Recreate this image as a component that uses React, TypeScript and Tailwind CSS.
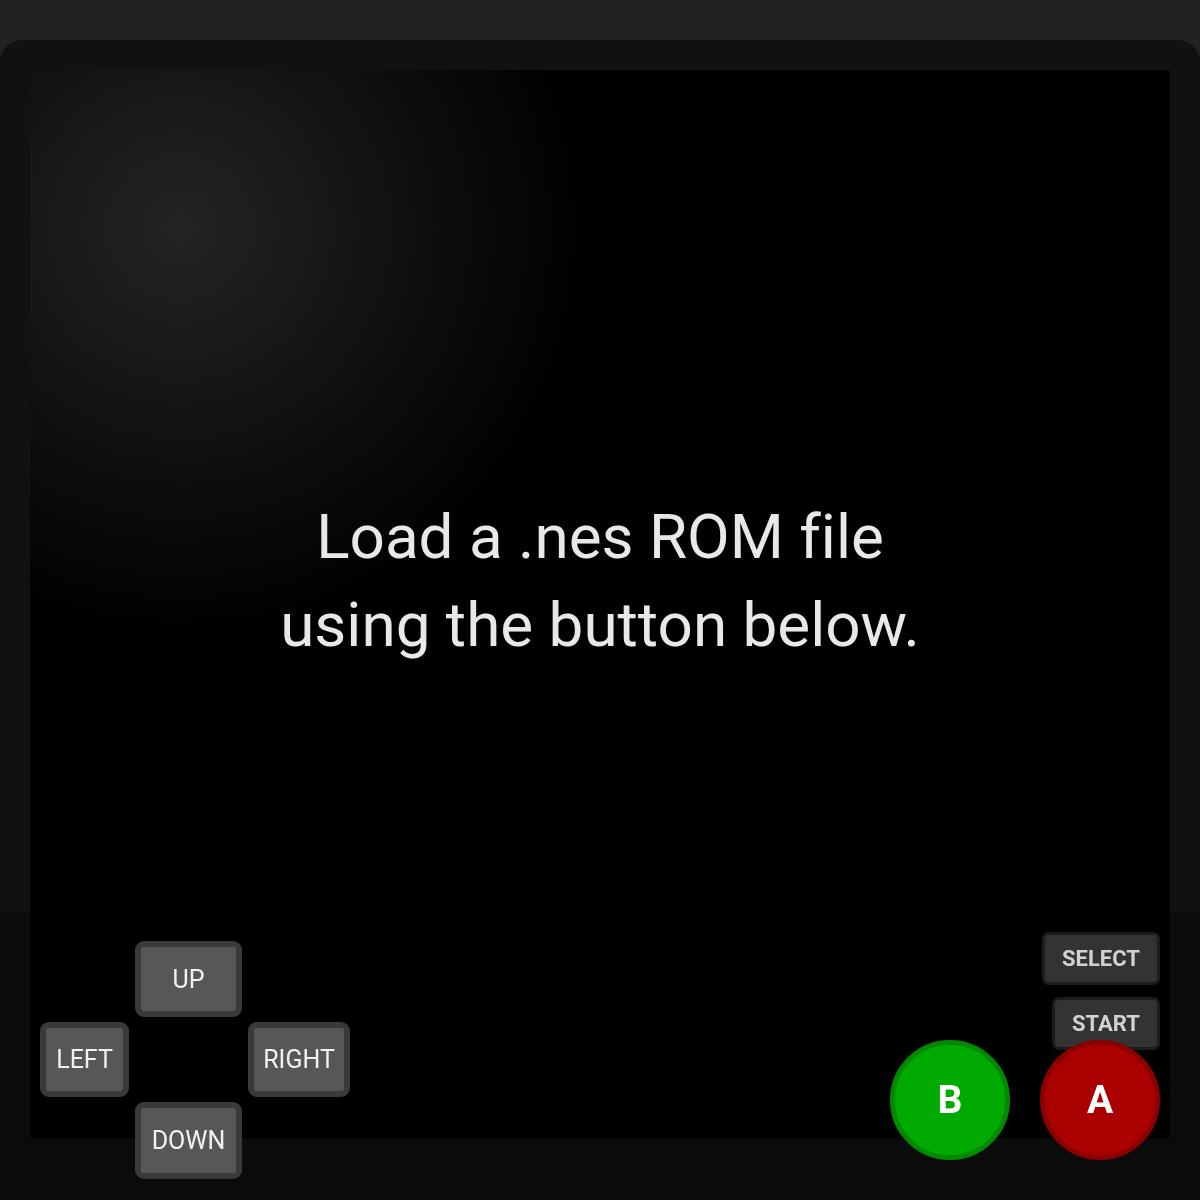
import React from 'react';

const dpadKey =
  'flex items-center justify-center rounded-[9px] border-[6px] border-[#3a3a3a] bg-[#575757] text-[25px] text-[#f2f2f2] leading-none';

const DPad: React.FC = () => (
  <div className="grid grid-cols-[89px_107px_102px] grid-rows-[76px_75px_77px] gap-x-[6px] gap-y-[5px]">
    <div />
    <button className={dpadKey}>UP</button>
    <div />
    <button className={dpadKey}>LEFT</button>
    <div />
    <button className={dpadKey}>RIGHT</button>
    <div />
    <button className={dpadKey}>DOWN</button>
    <div />
  </div>
);

const smallKey =
  'flex h-[53px] items-center justify-center rounded-[7px] border-[3px] border-[#1c1c1c] bg-[#333333] text-[22px] font-bold text-[#d2d2d2] leading-none';

export default function App() {
  return (
    <div className="min-h-[1200px] bg-[#222222] pt-[40px] font-['Roboto',sans-serif] overflow-hidden">
      {/* Console body */}
      <div className="min-h-[1160px] rounded-t-[22px] bg-[#111111] px-[30px] pt-[30px]">
        {/* Screen */}
        <div className="relative flex h-[1068px] flex-col items-center rounded-[2px] bg-black bg-[radial-gradient(circle_at_150px_158px,#242424_0px,#000000_410px)] pt-[423px] text-[62px] leading-[88px] text-[#e8e8e8] [font-variant-ligatures:none]">
          <p>Load a .nes ROM file</p>
          <p>using the button below.</p>
        </div>
      </div>

      {/* Touch controls overlay */}
      <div className="fixed bottom-0 left-0 right-0 flex h-[288px] items-end justify-between bg-black/35 px-[40px] pb-[21px]">
        <DPad />
        <div className="mb-[19px] flex flex-col items-end">
          <button className={`${smallKey} w-[118px]`}>SELECT</button>
          <button className={`${smallKey} mt-[12px] w-[108px]`}>START</button>
          <div className="relative -mt-[10px] flex gap-[30px]">
            <button className="flex h-[120px] w-[120px] items-center justify-center rounded-full border-[5px] border-[#008a00] bg-[#00aa00] text-[39px] font-bold text-white leading-none">
              B
            </button>
            <button className="flex h-[120px] w-[120px] items-center justify-center rounded-full border-[5px] border-[#8a0000] bg-[#aa0000] text-[39px] font-bold text-white leading-none">
              A
            </button>
          </div>
        </div>
      </div>
    </div>
  );
}
